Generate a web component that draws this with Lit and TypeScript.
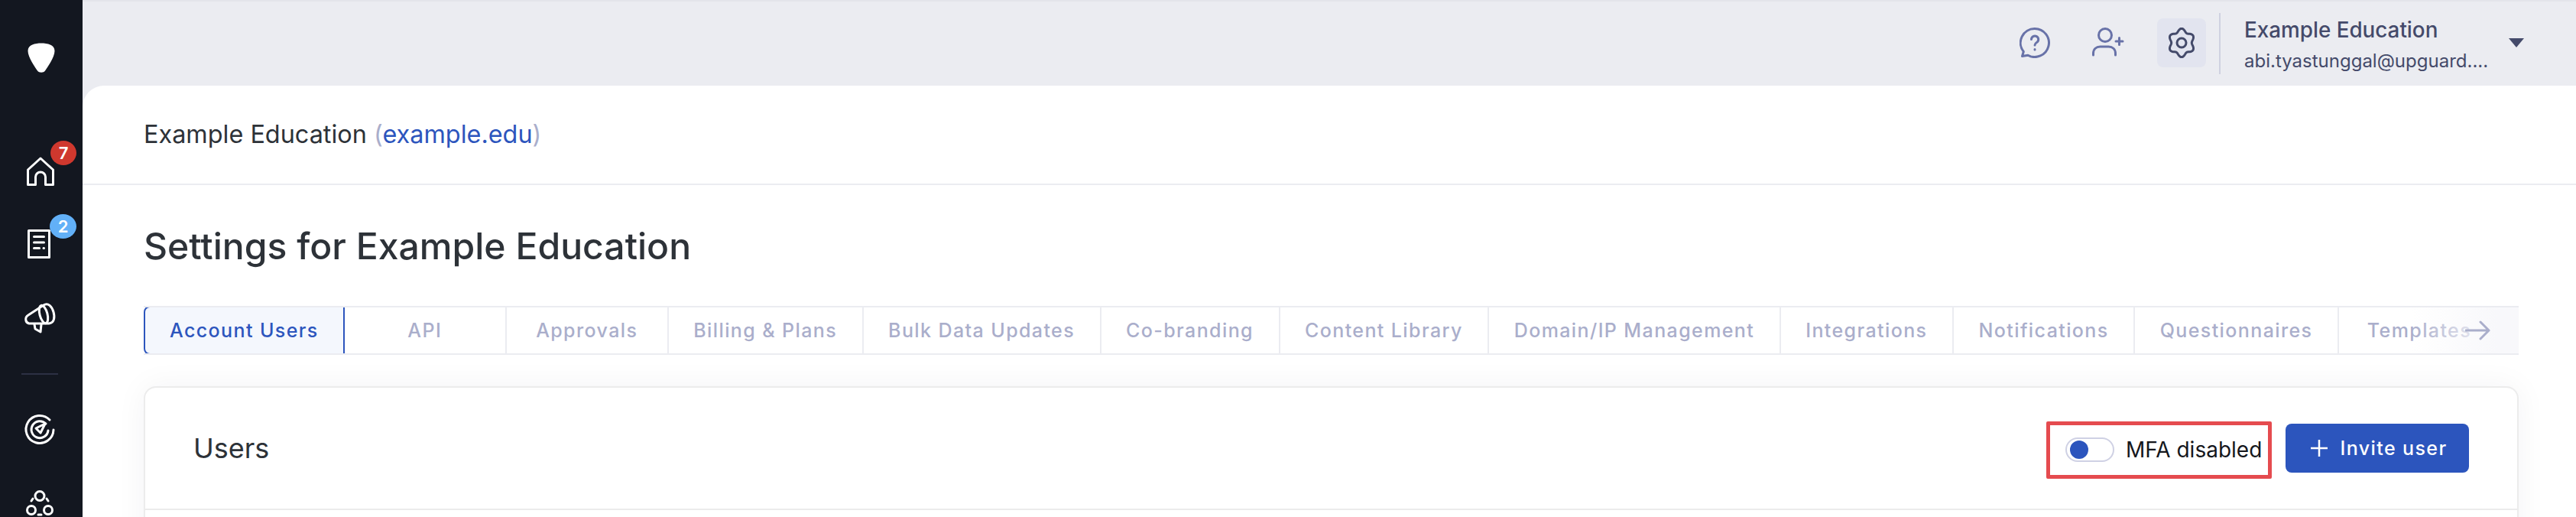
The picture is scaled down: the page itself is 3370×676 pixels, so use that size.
import { LitElement, css, html, svg } from 'lit';
import { customElement } from 'lit/decorators.js';

const TABS = [
  'Account Users',
  'API',
  'Approvals',
  'Billing & Plans',
  'Bulk Data Updates',
  'Co-branding',
  'Content Library',
  'Domain/IP Management',
  'Integrations',
  'Notifications',
  'Questionnaires',
  'Templates',
];

// six soft lobes, slightly narrower than tall like the reference cog
const cogPoints = Array.from({ length: 120 }, (_, i) => {
  const a = (i / 120) * Math.PI * 2;
  const r = 16.5 + 2.2 * Math.cos(6 * (a + Math.PI / 2));
  return `${(20 + 0.93 * r * Math.cos(a)).toFixed(2)},${(20 + r * Math.sin(a)).toFixed(2)}`;
}).join(' ');

const homeIcon = svg`<path d="M4.500 37.500V18L21 3 37.500 18V37.500H27.500V27.500a6.500 6.500 0 0 0-13 0V37.500Z"/>`;
const docIcon = svg`<rect x="5.500" y="2.500" width="27" height="35"/><path d="M12.500 10.500h13M12.500 18h13M12.500 25.500h7M25 25.500h.5"/>`;
const megaphoneIcon = svg`<path d="M5 19L25 6C31 2 36 8 38 15C40 22 39 29 32 30L6 30C1 29 0 22 5 19Z"/><ellipse cx="25" cy="18" rx="5" ry="12" transform="rotate(-15 25 18)"/><path d="M13 31L14 37 21 41 22 31"/>`;
const radarIcon = svg`<path d="M33 8A18 18 0 1 0 38 21M28 13A11 11 0 1 0 31 22"/><path d="M15 19L27 13 21 25Z"/>`;
const groupIcon = svg`<circle cx="20" cy="11.500" r="6"/><circle cx="9" cy="30" r="5.500"/><circle cx="31" cy="30" r="5.500"/><path d="M9 18l2-3M31 18l-2-3M18 36h4"/>`;

/**
 * Settings page for an organisation, with the dark nav rail on the left.
 */
@customElement('app-root')
export class AppRoot extends LitElement {
  private navIcon(content: unknown, badge = '', badgeClass = '') {
    return html`
      <div class="nav-item">
        <svg width="40" height="40" viewBox="0 0 40 40">${content}</svg>
        ${badge ? html`<span class="badge ${badgeClass}">${badge}</span>` : ''}
      </div>
    `;
  }

  private renderSidebar() {
    return html`
      <nav class="sidebar">
        <div class="logo">
          <svg width="36" height="40" viewBox="0 0 36 40">
            <path
              d="M18 0.500C26 0.500 35.500 2.500 35.500 10.500 35.500 19 26 32 23 36.500 21 39.500 15 39.500 13 36.500 10 32 0.500 19 0.500 10.500 0.500 2.500 10 0.500 18 0.500Z"
              fill="#fff"
            />
          </svg>
        </div>
        <div class="nav-group">
          ${this.navIcon(homeIcon, '7', 'red')} ${this.navIcon(docIcon, '2', 'blue')}
          ${this.navIcon(megaphoneIcon)}
        </div>
        <div class="nav-divider"></div>
        <div class="nav-group lower">
          ${this.navIcon(radarIcon)} ${this.navIcon(groupIcon)}
        </div>
      </nav>
    `;
  }

  private renderTopbar() {
    return html`
      <header class="topbar">
        <div class="top-icon">
          <svg width="40" height="40" viewBox="0 0 40 40">
            <path d="M20 1.500a18.500 18.500 0 1 1-9 34.700l-7.500 1.300 1.800-6A18.500 18.500 0 0 1 20 1.500Z" />
            <path d="M15.500 15.500a4.600 4.600 0 1 1 7 4c-1.600 1-2.500 1.800-2.500 3.500M20 28.500v.5" />
          </svg>
        </div>
        <div class="top-icon">
          <svg width="44" height="40" viewBox="0 0 44 40">
            <circle cx="18" cy="10" r="8.500" />
            <path d="M2.500 36v-2c0-6 4-9 9-9h11c5 0 9 3 9 9v2M32 18h9M36.500 13.500v9" />
          </svg>
        </div>
        <div class="top-icon active">
          <svg width="40" height="40" viewBox="0 0 40 40">
            <polygon points=${cogPoints} />
            <circle cx="20" cy="20" r="6" />
          </svg>
        </div>
        <div class="top-divider"></div>
        <div class="account">
          <div class="account-name">Example Education</div>
          <div class="account-mail">abi.tyastunggal@upguard....</div>
        </div>
        <div class="caret"></div>
      </header>
    `;
  }

  private renderTabs() {
    return html`
      <div class="tabs">
        ${TABS.map(
          (t, i) => html`<div class="tab ${i === 0 ? 'active' : ''}">${t}</div>`
        )}
        <div class="tabs-fade">
          <svg width="34" height="26" viewBox="0 0 34 26">
            <path d="M1 13h30M20 2l11 11-11 11" />
          </svg>
        </div>
      </div>
    `;
  }

  render() {
    return html`
      ${this.renderSidebar()}
      <div class="right">
        ${this.renderTopbar()}
        <main class="main">
          <div class="crumb">
            Example Education <span class="paren">(<span class="link">example.edu</span>)</span>
          </div>
          <div class="content">
            <h1>Settings for Example Education</h1>
            ${this.renderTabs()}
            <section class="card">
              <div class="card-head">
                <h2>Users</h2>
                <div class="mfa">
                  <div class="toggle"><span class="knob"></span></div>
                  <span>MFA disabled</span>
                </div>
                <button class="invite">
                  <svg width="24" height="24" viewBox="0 0 24 24"><path d="M12 1v22M1 12h22" /></svg>
                  Invite user
                </button>
              </div>
            </section>
          </div>
        </main>
      </div>
    `;
  }

  static styles = css`
    :host {
      display: flex;
      width: 100%;
      height: 676px;
      overflow: hidden;
      font-family: Inter, 'Liberation Sans', sans-serif;
      color: #2d3238;
      background: #ebecf1;
    }

    /* nav rail */
    .sidebar {
      width: 108px;
      flex: none;
      background: #131720;
      display: flex;
      flex-direction: column;
      align-items: center;
      box-sizing: border-box;
      padding-top: 56px;
    }
    .logo {
      height: 40px;
      margin-bottom: 108px;
    }
    .nav-group {
      display: flex;
      flex-direction: column;
      gap: 54.500px;
      margin-right: 4px;
    }
    .nav-group.lower {
      gap: 56px;
    }
    .nav-item {
      position: relative;
      width: 40px;
      height: 40px;
    }
    .nav-item svg {
      display: block;
      overflow: visible;
      fill: none;
      stroke: #fff;
      stroke-width: 3;
      stroke-linecap: round;
      stroke-linejoin: round;
    }
    .badge {
      position: absolute;
      top: -20px;
      left: 34px;
      width: 34px;
      height: 32px;
      border-radius: 50%;
      color: #fff;
      font-size: 22px;
      font-weight: 600;
      line-height: 32px;
      text-align: center;
    }
    .badge.red {
      background: #cf382e;
    }
    .badge.blue {
      top: -19px;
      left: 33px;
      width: 35px;
      background: #62b0f7;
    }
    .nav-divider {
      width: 48px;
      height: 2px;
      background: #2c3044;
      margin: 55px 4px 51px 0;
      flex: none;
    }

    /* top bar */
    .right {
      flex: 1;
      min-width: 0;
      display: flex;
      flex-direction: column;
    }
    .topbar {
      height: 112px;
      flex: none;
      box-sizing: border-box;
      border-top: 2px solid #e3e4ea;
      display: flex;
      align-items: center;
      justify-content: flex-end;
      padding: 0 68px 0 0;
    }
    .top-icon {
      width: 64px;
      height: 64px;
      margin-right: 32px;
      margin-top: -2px;
      border-radius: 8px;
      display: flex;
      align-items: center;
      justify-content: center;
    }
    .top-icon svg {
      fill: none;
      stroke: #6872a8;
      stroke-width: 3;
      stroke-linecap: round;
      stroke-linejoin: round;
    }
    .top-icon.active {
      margin-right: 17px;
      background: #e2e4ef;
    }
    .top-icon.active svg {
      stroke: #444a6a;
    }
    .top-divider {
      width: 2px;
      height: 80px;
      margin-right: 31px;
      background: #cfd1e0;
    }
    .account {
      width: 346px;
      margin-top: 3px;
      color: #444a6a;
      white-space: nowrap;
    }
    .account-name {
      font-size: 27.800px;
      font-weight: 500;
      line-height: 42px;
    }
    .account-mail {
      font-size: 24px;
      line-height: 40px;
    }
    .caret {
      width: 0;
      height: 0;
      margin-top: -3px;
      border-left: 10px solid transparent;
      border-right: 10px solid transparent;
      border-top: 12px solid #444a6a;
    }

    /* page */
    .main {
      flex: 1;
      min-height: 0;
      background: #fff;
      border-top-left-radius: 28px;
    }
    .crumb {
      height: 128px;
      border-bottom: 2px solid #ebecf1;
      padding-left: 80px;
      font-size: 32.400px;
      line-height: 128px;
      white-space: nowrap;
    }
    .paren {
      color: #aaaecb;
    }
    .link {
      color: #2c55bd;
    }
    .content {
      padding: 0 75px 0 80px;
    }
    h1 {
      margin: 50px 0 48px;
      font-size: 48.100px;
      font-weight: 500;
      line-height: 60px;
    }

    /* tabs */
    .tabs {
      position: relative;
      display: flex;
      height: 64px;
      box-sizing: border-box;
      overflow: hidden;
      border-top: 2px solid #ebecf1;
      border-bottom: 2px solid #ebecf1;
    }
    .tab {
      flex: none;
      min-width: 212px;
      box-sizing: border-box;
      padding: 0 32.500px;
      border-right: 2px solid #ebecf1;
      color: #aaaecb;
      font-size: 25px;
      font-weight: 500;
      letter-spacing: 1.400px;
      line-height: 60px;
      text-align: center;
      white-space: nowrap;
    }
    .tab.active {
      margin: -2px 0;
      padding: 0 32px;
      height: 64px;
      line-height: 60px;
      background: #f4f7fd;
      border: 2px solid #2c55bd;
      border-radius: 8px 0 0 8px;
      color: #2c55bd;
    }
    .tabs-fade {
      position: absolute;
      top: 0;
      right: 0;
      bottom: 0;
      width: 140px;
      box-sizing: border-box;
      padding-left: 70px;
      display: flex;
      align-items: center;
      background: linear-gradient(90deg, rgba(248, 248, 251, 0), #f8f8fb 80%);
    }
    .tabs-fade svg {
      fill: none;
      stroke: #aaaecb;
      stroke-width: 3;
      stroke-linecap: round;
      stroke-linejoin: round;
    }

    /* card */
    .card {
      margin-top: 41px;
      height: 300px;
      box-sizing: border-box;
      border: 2px solid #ececec;
      border-radius: 16px;
      box-shadow: 0 0 40px rgba(30, 30, 60, 0.05);
      background: #fff;
    }
    .card-head {
      height: 160px;
      box-sizing: border-box;
      border-bottom: 2px solid #ebebeb;
      padding: 0 63px 0 63px;
      display: flex;
      align-items: center;
    }
    h2 {
      flex: 1;
      margin: 0;
      font-size: 36px;
      font-weight: 400;
    }
    .mfa {
      box-sizing: border-box;
      width: 295px;
      height: 75px;
      margin: 4px 18px 0 0;
      padding-left: 20px;
      display: flex;
      align-items: center;
      gap: 15px;
      border: 5px solid #e54b4f;
      border-radius: 2px;
      color: #15171c;
      font-size: 28px;
      white-space: nowrap;
    }
    .toggle {
      box-sizing: border-box;
      width: 64px;
      height: 32px;
      padding: 2px 4px;
      border: 2px solid #cfd1e4;
      border-radius: 16px;
      flex: none;
    }
    .knob {
      display: block;
      width: 24px;
      height: 24px;
      border-radius: 50%;
      background: #2c55bd;
    }
    .invite {
      width: 240px;
      height: 64px;
      padding: 0 0 0 3px;
      border: none;
      border-radius: 8px;
      background: #2c55bd;
      color: #fff;
      font: 500 25px Inter, 'Liberation Sans', sans-serif;
      letter-spacing: 1.400px;
      display: flex;
      align-items: center;
      justify-content: center;
      gap: 16px;
    }
    .invite svg {
      fill: none;
      stroke: #fff;
      stroke-width: 2.500;
    }
  `;
}

declare global {
  interface HTMLElementTagNameMap {
    'app-root': AppRoot;
  }
}
